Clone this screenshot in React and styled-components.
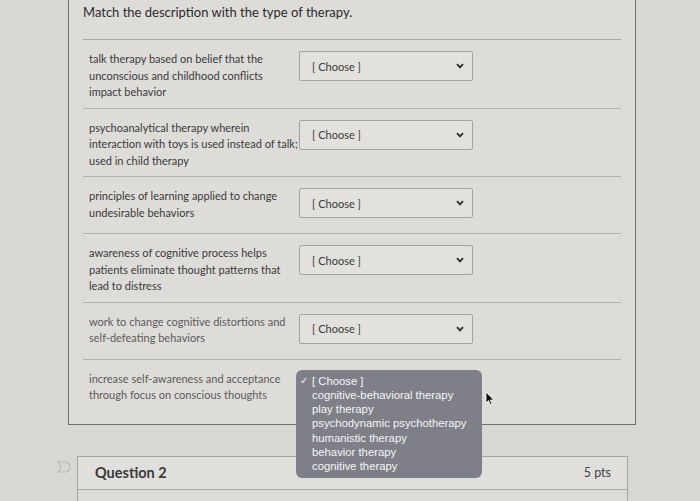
import React from "react";
import styled, { createGlobalStyle } from "styled-components";

const GlobalStyle = createGlobalStyle`
  html, body { margin: 0; padding: 0; }
  body {
    background: #d9d7d4;
    font-family: Lato, "Open Sans", "Liberation Sans", sans-serif;
    color: #3a3a3a;
    width: 700px;
    height: 501px;
    overflow: hidden;
  }
`;

const Page = styled.div`
  position: relative;
  padding-left: 68px;
  width: 700px;
  box-sizing: border-box;
`;

const QuizBox = styled.section`
  width: 568px;
  box-sizing: border-box;
  background: #dedcd9;
  border: 1px solid #6f6f6f;
  border-top: none;
  padding: 3px 14px 8px;
`;

const Title = styled.h2`
  margin: 0;
  font-size: 13px;
  font-weight: 400;
  line-height: 18px;
  color: #2b2b2b;
  padding-bottom: 18px;
  border-bottom: 1px solid #a9a9a9;
`;

const Row = styled.div`
  display: grid;
  grid-template-columns: 210px 174px;
  align-items: start;
  padding: 11px 6px 7px;
  border-bottom: ${(p) => (p.$last ? "none" : "1px solid #b3b3b3")};
`;

const Desc = styled.div`
  font-size: 11px;
  line-height: 16.5px;
  min-height: 38px;
  white-space: nowrap;
  color: ${(p) => (p.$faded ? "#5a5a5a" : "#3a3a3a")};
`;

const SelectCell = styled.div`
  position: relative;
  height: 30px;
`;

const SelectBox = styled.div`
  height: 30px;
  box-sizing: border-box;
  border: 1px solid #a3a3a3;
  border-radius: 2px;
  background: #e3e1de;
  display: flex;
  align-items: center;
  justify-content: space-between;
  padding: 0 8px 0 12px;
  font-size: 11px;
  color: #3a3a3a;
`;

const Chevron = () => (
  <svg width="8" height="6" viewBox="0 0 8 6">
    <path d="M1 1.2 L4 4.4 L7 1.2" fill="none" stroke="#2e2e2e" strokeWidth="1.8" />
  </svg>
);

const Menu = styled.ul`
  position: absolute;
  left: -3px;
  top: -1px;
  z-index: 5;
  width: 186px;
  box-sizing: border-box;
  margin: 0;
  padding: 4px 0;
  list-style: none;
  background: #7e7f87;
  border-radius: 6px;
  font-family: "Liberation Sans", Arial, sans-serif;
  font-size: 11.3px;
  color: #f5f5f7;
`;

const MenuItem = styled.li`
  position: relative;
  line-height: 14.3px;
  padding-left: 16px;
  white-space: nowrap;
`;

const Check = styled.span`
  position: absolute;
  left: 4px;
  top: 0;
  font-size: 10px;
`;

const Cursor = styled.svg`
  position: absolute;
  left: 485px;
  top: 391px;
  z-index: 6;
`;

const Q2Wrap = styled.div`
  display: flex;
  align-items: flex-start;
  gap: 6px;
  margin-top: 31px;
  margin-left: -11px;
`;

const FlagIcon = styled.svg`
  margin-top: 5px;
  flex: none;
`;

const Q2Box = styled.section`
  width: 551px;
  height: 60px;
  box-sizing: border-box;
  background: #dddbd8;
  border: 1px solid #a4a4a4;
`;

const Q2Header = styled.header`
  height: 33px;
  box-sizing: border-box;
  display: flex;
  align-items: center;
  justify-content: space-between;
  padding: 0 16px 0 17px;
  border-bottom: 1px solid #a8a8a8;
  background: #e1dfdc;
`;

const Q2Title = styled.h3`
  margin: 0;
  font-size: 14.5px;
  font-weight: 700;
  color: #3a3a3a;
`;

const Pts = styled.span`
  font-size: 12.5px;
  color: #444;
`;

const rows = [
  ["talk therapy based on belief that the", "unconscious and childhood conflicts", "impact behavior"],
  ["psychoanalytical therapy wherein", "interaction with toys is used instead of talk;", "used in child therapy"],
  ["principles of learning applied to change", "undesirable behaviors"],
  ["awareness of cognitive process helps", "patients eliminate thought patterns that", "lead to distress"],
  ["work to change cognitive distortions and", "self-defeating behaviors"],
  ["increase self-awareness and acceptance", "through focus on conscious thoughts"],
];

const options = [
  "[ Choose ]",
  "cognitive-behavioral therapy",
  "play therapy",
  "psychodynamic psychotherapy",
  "humanistic therapy",
  "behavior therapy",
  "cognitive therapy",
];

export default function App() {
  return (
    <>
      <GlobalStyle />
      <Page>
        <QuizBox>
          <Title>Match the description with the type of therapy.</Title>
          {rows.map((lines, i) => {
            const last = i === rows.length - 1;
            return (
              <Row key={i} $last={last}>
                <Desc $faded={i >= 4}>
                  {lines.map((l, j) => (
                    <React.Fragment key={j}>
                      {l}
                      {j < lines.length - 1 && <br />}
                    </React.Fragment>
                  ))}
                </Desc>
                <SelectCell>
                  {last ? (
                    <Menu>
                      {options.map((o, k) => (
                        <MenuItem key={o}>
                          {k === 0 && <Check>✓</Check>}
                          {o}
                        </MenuItem>
                      ))}
                    </Menu>
                  ) : (
                    <SelectBox>
                      <span>[ Choose ]</span>
                      <Chevron />
                    </SelectBox>
                  )}
                </SelectCell>
              </Row>
            );
          })}
        </QuizBox>
        <Q2Wrap>
          <FlagIcon width="14" height="12" viewBox="0 0 14 12">
            <path d="M1 1 H8 A5 5 0 0 1 8 11 H1 L4 6 Z" fill="none" stroke="#b9b9b9" strokeWidth="1.2" strokeLinejoin="round" />
          </FlagIcon>
          <Q2Box>
            <Q2Header>
              <Q2Title>Question 2</Q2Title>
              <Pts>5 pts</Pts>
            </Q2Header>
          </Q2Box>
        </Q2Wrap>
        <Cursor width="10" height="15" viewBox="0 0 10 15">
          <path d="M1 1 L1 12 L3.6 9.6 L5.4 13.6 L7 12.9 L5.3 9 L8.8 9 Z" fill="#111" stroke="#fff" strokeWidth="0.8" />
        </Cursor>
      </Page>
    </>
  );
}
